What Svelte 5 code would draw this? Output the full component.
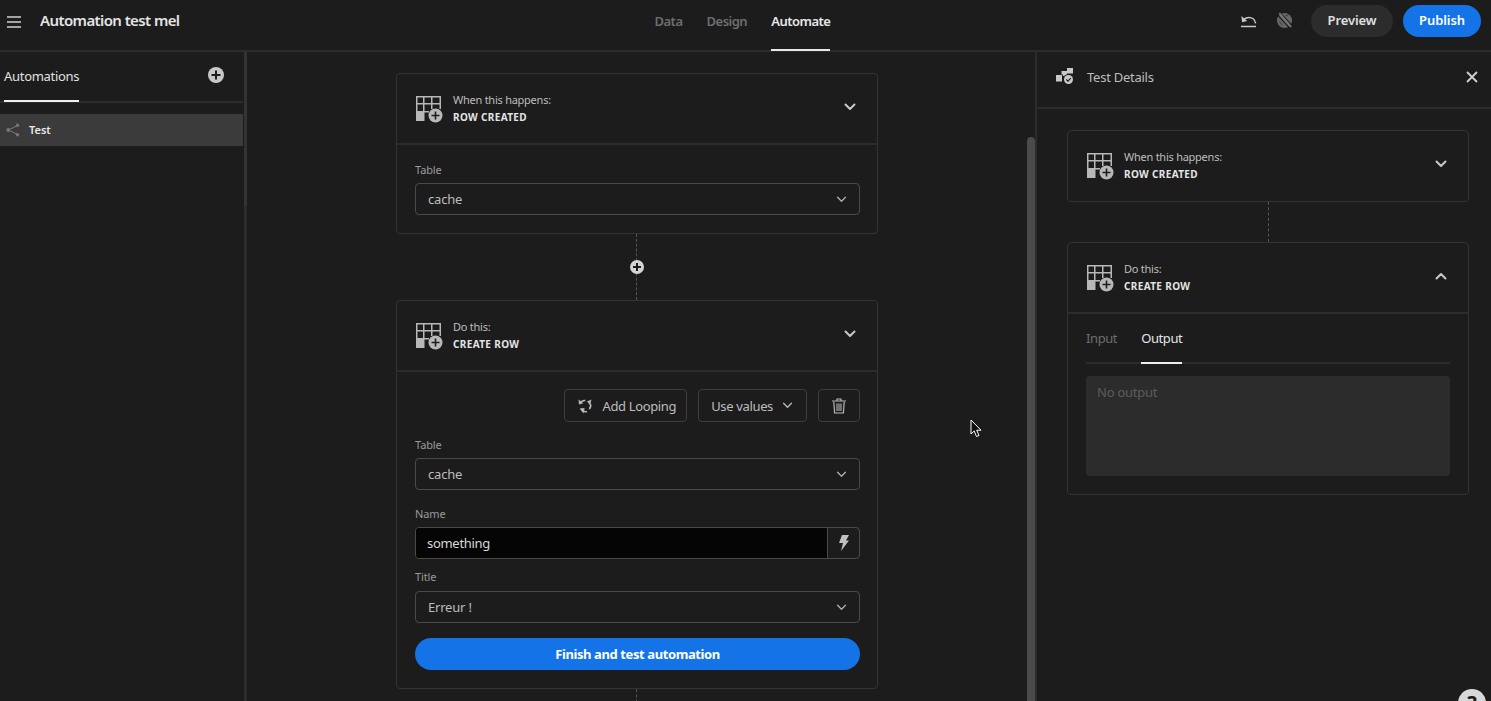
<script lang="ts">
  const tabs = ['Data', 'Design', 'Automate'];
</script>

{#snippet tableIcon()}
  <svg class="step-icon" viewBox="0 0 28 28" width="28" height="28">
    <path fill="#b8b8b8" d="M1 1h25v13h-1.500V9.500h-7V14H16V9.500H9.500V16H14v1.500H9.500V26H1zM2.500 2.500V8H8V2.500zM9.500 2.500V8H16V2.500zM17.500 2.500V8h7V2.500zM2.500 9.500V16H8V9.500z" fill-rule="evenodd" />
    <circle cx="20.500" cy="20.500" r="7" fill="#b8b8b8" />
    <path fill="#1c1c1c" d="M19.700 16.500h1.600v3.200h3.200v1.600h-3.200v3.200h-1.600v-3.200h-3.200v-1.600h3.200z" />
  </svg>
{/snippet}

{#snippet chevron(up = false)}
  <svg class="chev head-chev" class:up viewBox="0 0 12 8" width="12" height="8">
    <path d="M1.500 1.500 6 6l4.500-4.500" fill="none" stroke="currentColor" stroke-width="2" stroke-linecap="round" stroke-linejoin="round" />
  </svg>
{/snippet}

{#snippet stepHead(kicker, title, up = false)}
  <div class="step-head">
    {@render tableIcon()}
    <div class="step-text">
      <div class="kicker">{kicker}</div>
      <div class="step-title">{title}</div>
    </div>
    {@render chevron(up)}
  </div>
{/snippet}

{#snippet select(value)}
  <div class="select">
    <span>{value}</span>
    <svg class="chev small" viewBox="0 0 12 8" width="11" height="7">
      <path d="M1.500 1.500 6 6l4.500-4.500" fill="none" stroke="currentColor" stroke-width="1.500" stroke-linecap="round" stroke-linejoin="round" />
    </svg>
  </div>
{/snippet}

<div class="app">
  <header class="topbar">
    <div class="top-left">
      <svg viewBox="0 0 14 12" width="14" height="12" class="burger">
        <path d="M0 1h14M0 6h14M0 11h14" stroke="#d0d0d0" stroke-width="1.600" />
      </svg>
      <span class="app-name">Automation test mel</span>
    </div>
    <nav class="top-nav">
      {#each tabs as tab}
        <span class="top-tab" class:active={tab === 'Automate'}>{tab}</span>
      {/each}
    </nav>
    <div class="top-right">
      <svg viewBox="0 0 18 14" width="17" height="14" class="undo">
        <path d="M1 12.800h16" stroke="#c8c8c8" stroke-width="1.600" />
        <path d="M16.500 9.500C16 5 12.500 3.200 9.500 3.200 7.500 3.200 5.800 3.800 4 5.200" fill="none" stroke="#c8c8c8" stroke-width="1.600" />
        <path d="M1.500 1.800 2.200 8.200 7.600 7z" fill="#c8c8c8" />
      </svg>
      <svg viewBox="0 0 18 18" width="17" height="17" class="globe">
        <circle cx="9" cy="9" r="8" fill="#666" />
        <path d="M5 1.500 17 14.500M2 3.500 14 16.500" stroke="#1c1c1c" stroke-width="1.300" />
        <path d="M3.500 1 16 16" stroke="#7a7a7a" stroke-width="1.800" />
        <path d="M9.500 4.500 13 3M3.500 10 7 14" stroke="#3a3a3a" stroke-width="1" />
      </svg>
      <span class="pill preview">Preview</span>
      <span class="pill publish">Publish</span>
    </div>
  </header>

  <div class="columns">
    <aside class="sidebar">
      <div class="side-tabs">
        <span class="side-tab">Automations</span>
        <svg viewBox="0 0 16 16" width="16" height="16" class="side-add">
          <circle cx="8" cy="8" r="8" fill="#c8c8c8" />
          <path d="M7 3.500h2V7h3.500v2H9v3.500H7V9H3.500V7H7z" fill="#1c1c1c" />
        </svg>
      </div>
      <div class="side-row">
        <svg viewBox="0 0 14 14" width="14" height="14">
          <path d="M11.500 2.500 2.500 7l9 4.500" fill="none" stroke="#777" stroke-width="1" />
          <circle cx="11.500" cy="2.300" r="1.700" fill="#777" />
          <circle cx="2.300" cy="7" r="1.900" fill="#777" />
          <circle cx="11.500" cy="11.700" r="1.700" fill="#777" />
        </svg>
        <span class="side-name">Test</span>
      </div>
      <div class="side-thumb"></div>
    </aside>

    <main class="canvas">
      <div class="card">
        {@render stepHead('When this happens:', 'ROW CREATED')}
        <div class="card-body first">
          <div class="field-label">Table</div>
          {@render select('cache')}
        </div>
      </div>

      <div class="connector">
        <svg viewBox="0 0 14 14" width="14" height="14" class="conn-add">
          <circle cx="7" cy="7" r="7" fill="#d4d4d4" />
          <path d="M6 3h2v3h3v2H8v3H6V8H3V6h3z" fill="#1c1c1c" />
        </svg>
      </div>

      <div class="card">
        {@render stepHead('Do this:', 'CREATE ROW')}
        <div class="card-body">
          <div class="actions">
            <span class="btn looping">
              <svg viewBox="0 0 16 16" width="16" height="16">
                <path d="M3 5.500C4 3.300 6 2.200 8.400 2.500M13.300 5.500c.8 2 .4 4-1 5.600M10 13.400c-2.300.6-4.800-.3-6.200-2.500" fill="none" stroke="#b8b8b8" stroke-width="1.500" />
                <path d="M1.500 1.500 2 6.400l4.300-1.200zM14.500 1.500 13 7l-3-3.500zM6.500 15.500 2.800 10.500l4.800-.5z" fill="#b8b8b8" />
              </svg>
              Add Looping
            </span>
            <span class="btn values">
              Use values
              <svg viewBox="0 0 12 8" width="11" height="7" class="chev">
                <path d="M1.500 1.500 6 6l4.500-4.500" fill="none" stroke="#b8b8b8" stroke-width="1.500" stroke-linecap="round" stroke-linejoin="round" />
              </svg>
            </span>
            <span class="btn icon-only">
              <svg viewBox="0 0 14 16" width="14" height="16">
                <path d="M0 3h14M5 3V1h4v2M1.800 4l.8 11h8.800l.8-11" fill="none" stroke="#b8b8b8" stroke-width="1.200" />
                <path d="M5 5.500v7.500M7 5.500v7.500M9 5.500v7.500" stroke="#b8b8b8" stroke-width="1.100" />
              </svg>
            </span>
          </div>
          <div class="field-label table-label">Table</div>
          {@render select('cache')}
          <div class="field-label name-label">Name</div>
          <div class="combo">
            <span class="combo-input">something</span>
            <span class="combo-btn">
              <svg viewBox="0 0 10 16" width="10" height="16">
                <path d="M3 0h7L7 5.500h3L2 16l2-8H0z" fill="#c0c0c0" />
              </svg>
            </span>
          </div>
          <div class="field-label title-label">Title</div>
          {@render select('Erreur !')}
          <div class="finish">Finish and test automation</div>
        </div>
      </div>
      <div class="tail"></div>

      <div class="scroll-track"><div class="scroll-thumb"></div></div>
    </main>

    <aside class="details">
      <div class="details-head">
        <svg viewBox="0 0 18 17" width="18" height="17">
          <path d="M0 7h6v6.500H0zM5.500 3H11v5H7V6.500H5.500zM11 0h6v5.500h-6z" fill="#c8c8c8" />
          <circle cx="12.500" cy="11.500" r="5.500" fill="#1c1c1c" />
          <circle cx="12.500" cy="11.500" r="4.500" fill="#c8c8c8" />
          <path d="M10.300 11.500l1.700 1.700 2.800-3" fill="none" stroke="#1c1c1c" stroke-width="1.200" />
        </svg>
        <span class="details-title">Test Details</span>
        <svg viewBox="0 0 12 12" width="12" height="12" class="close">
          <path d="M1 1l10 10M11 1 1 11" stroke="#d0d0d0" stroke-width="1.800" />
        </svg>
      </div>
      <div class="details-body">
        <div class="card trigger">
          {@render stepHead('When this happens:', 'ROW CREATED')}
        </div>
        <div class="link"></div>
        <div class="card">
          {@render stepHead('Do this:', 'CREATE ROW', true)}
          <div class="output-body">
            <div class="io-tabs">
              <span class="io-tab">Input</span>
              <span class="io-tab active">Output</span>
            </div>
            <div class="output-box">No output</div>
          </div>
        </div>
      </div>
    </aside>
  </div>

  <svg class="cursor" viewBox="0 0 12 19" width="12" height="19">
    <path d="M1 1v14l3.200-3 2.300 5.500 2.500-1-2.300-5.300H11z" fill="#111" stroke="#fff" stroke-width="1" />
  </svg>
  <div class="help"></div>
</div>

<style>
  :global(body) {
    margin: 0;
    background: #1c1c1c;
    overflow: hidden;
  }

  .app {
    height: 701px;
    display: flex;
    flex-direction: column;
    background: #1c1c1c;
    color: #d0d0d0;
    font-family: "Noto Sans", sans-serif;
    font-size: 13px;
    overflow: hidden;
    position: relative;
  }

  .topbar {
    height: 50px;
    flex: none;
    display: grid;
    grid-template-columns: 1fr auto 1fr;
    align-items: center;
    border-bottom: 2px solid #2c2c2c;
  }

  .top-left {
    display: flex;
    align-items: center;
    gap: 19px;
    padding-left: 7px;
    margin-top: -10px;
  }

  .burger {
    display: block;
    margin-top: 3px;
  }

  .app-name {
    font-size: 15px;
    font-weight: 600;
    color: #e4e4e4;
    letter-spacing: -0.6px;
  }

  .top-nav {
    display: flex;
    gap: 24px;
    height: 100%;
    align-items: center;
    margin-right: 6px;
  }

  .top-tab {
    height: 100%;
    display: flex;
    align-items: center;
    padding-bottom: 8px;
    box-sizing: border-box;
    font-size: 13px;
    font-weight: 600;
    color: #6e6e6e;
    letter-spacing: -0.5px;
    border-bottom: 2px solid transparent;
    margin-bottom: -2px;
  }

  .top-tab.active {
    color: #e8e8e8;
    border-bottom-color: #e8e8e8;
  }

  .top-right {
    justify-content: flex-end;
    display: flex;
    align-items: center;
    padding-right: 10px;
    margin-top: -9px;
  }

  .undo {
    margin-right: 19px;
  }

  .globe {
    margin-right: 18px;
  }

  .pill {
    height: 32px;
    box-sizing: border-box;
    padding-bottom: 2px;
    border-radius: 16px;
    display: flex;
    align-items: center;
    justify-content: center;
    font-size: 13px;
    font-weight: 600;
    letter-spacing: -0.1px;
  }

  .preview {
    width: 82px;
    background: #2c2c2c;
    color: #e0e0e0;
    margin-right: 10px;
  }

  .publish {
    width: 78px;
    background: #1473e6;
    color: #fff;
  }

  .columns {
    flex: 1;
    min-height: 0;
    display: grid;
    grid-template-columns: 247px 789px 1fr;
  }

  .sidebar {
    border-right: 3px solid #2c2c2c;
    position: relative;
  }

  .side-thumb {
    position: absolute;
    top: 0;
    right: -3px;
    width: 3px;
    height: 154px;
    background: #333;
  }

  .side-tabs {
    border-bottom: 2px solid #2c2c2c;
    margin-right: 1px;
    display: flex;
    align-items: center;
    justify-content: space-between;
    padding: 0 19px 0 4px;
    height: 49px;
  }

  .side-tab {
    font-size: 13px;
    color: #e0e0e0;
    letter-spacing: -0.3px;
    height: 100%;
    line-height: 50px;
    border-bottom: 2px solid #efefef;
    width: 75px;
    white-space: nowrap;
  }

  .side-add {
    margin-top: -4px;
  }

  .side-row {
    margin-top: 11px;
    height: 32px;
    background: #3b3b3b;
    display: flex;
    align-items: center;
    gap: 9px;
    padding-left: 6px;
    font-size: 11px;
    font-weight: 600;
    color: #e8e8e8;
    margin-right: 1px;
  }

  .side-name {
    margin-top: -1px;
  }

  .canvas {
    position: relative;
    padding: 21px 9px 0 0;
    display: flex;
    flex-direction: column;
    align-items: center;
    overflow: hidden;
    box-sizing: border-box;
  }

  .card {
    box-sizing: border-box;
    width: 482px;
    flex: none;
    border: 1px solid #333;
    border-radius: 4px;
  }

  .step-head {
    height: 69px;
    display: flex;
    align-items: center;
    padding: 0 21px 0 18px;
    gap: 10px;
  }

  .step-icon {
    flex: none;
    margin-top: 1px;
  }

  .step-text {
    flex: 1;
    line-height: 16px;
    margin-bottom: 1px;
  }

  .kicker {
    font-size: 11px;
    color: #bdbdbd;
    letter-spacing: -0.25px;
  }

  .step-title {
    font-size: 10px;
    font-weight: 700;
    letter-spacing: 0.35px;
    color: #e4e4e4;
    margin-top: 1px;
  }

  .chev {
    display: block;
    color: #c8c8c8;
  }

  .head-chev {
    margin-bottom: 3px;
  }

  .chev.up {
    transform: rotate(180deg);
  }

  .card-body {
    border-top: 2px solid #2c2c2c;
    padding: 17px 17px 18px 18px;
    display: flex;
    flex-direction: column;
  }

  .card-body.first {
    padding-top: 18px;
  }

  .field-label {
    font-size: 11px;
    line-height: 14px;
    color: #9a9a9a;
    margin-bottom: 6px;
    letter-spacing: -0.1px;
  }

  .select {
    height: 32px;
    box-sizing: border-box;
    border: 1px solid #4a4a4a;
    border-radius: 4px;
    display: flex;
    align-items: center;
    justify-content: space-between;
    padding: 0 12px 0 12px;
    font-size: 13px;
    letter-spacing: -0.2px;
    color: #bdbdbd;
  }

  .select .chev {
    color: #b0b0b0;
  }

  .actions {
    display: flex;
    justify-content: flex-end;
    gap: 11px;
  }

  .btn {
    height: 33px;
    box-sizing: border-box;
    display: flex;
    align-items: center;
    gap: 9px;
    padding: 0 11px 0 12px;
    border: 1px solid #3e3e3e;
    border-radius: 4px;
    font-size: 13px;
    color: #bdbdbd;
    letter-spacing: -0.35px;
  }

  .looping {
    padding-right: 10px;
  }

  .values {
    padding-right: 13px;
  }

  .icon-only {
    width: 42px;
    justify-content: center;
    padding: 0;
  }

  .table-label {
    margin-top: 16px;
  }

  .name-label {
    margin-top: 17px;
  }

  .title-label {
    margin-top: 11px;
    margin-bottom: 7px;
  }

  .combo {
    height: 32px;
    box-sizing: border-box;
    display: flex;
    border: 1px solid #4a4a4a;
    border-radius: 4px;
    overflow: hidden;
  }

  .combo-input {
    flex: 1;
    background: #050505;
    display: flex;
    align-items: center;
    padding-left: 11px;
    font-size: 13px;
    letter-spacing: -0.3px;
    color: #d8d8d8;
  }

  .combo-btn {
    width: 31px;
    border-left: 1px solid #4a4a4a;
    display: flex;
    align-items: center;
    justify-content: center;
  }

  .finish {
    margin-top: 15px;
    height: 32px;
    border-radius: 16px;
    background: #1473e6;
    color: #fff;
    font-size: 13px;
    font-weight: 700;
    letter-spacing: -0.4px;
    display: flex;
    align-items: center;
    justify-content: center;
  }

  .connector {
    width: 1px;
    height: 66px;
    flex: none;
    border-left: 1px dashed #555;
    position: relative;
  }

  .conn-add {
    position: absolute;
    left: -7px;
    top: 26px;
  }

  .tail {
    width: 1px;
    height: 30px;
    flex: none;
    border-left: 1px dashed #555;
  }

  .scroll-track {
    position: absolute;
    top: 0;
    bottom: 0;
    right: 0;
    width: 9px;
  }

  .scroll-thumb {
    position: absolute;
    top: 85px;
    bottom: 0;
    left: 0;
    width: 8px;
    background: #4b4b4b;
    border-radius: 4px 4px 0 0;
  }

  .details {
    border-left: 2px solid #2c2c2c;
    margin-left: -1px;
  }

  .details-head {
    border-bottom: 2px solid #2c2c2c;
    display: flex;
    align-items: center;
    padding: 0 13px 6px 19px;
    box-sizing: border-box;
    gap: 13px;
    height: 57px;
  }

  .details-title {
    flex: 1;
    font-size: 13px;
    color: #bdbdbd;
    letter-spacing: -0.25px;
  }

  .details-body {
    padding: 21px 21px 0 30px;
    display: flex;
    flex-direction: column;
  }

  .details-body .card {
    width: 402px;
  }

  .details-body .trigger {
    height: 72px;
  }

  .link {
    margin-left: 201px;
    height: 40px;
    width: 1px;
    border-left: 1px dashed #555;
  }

  .output-body {
    border-top: 2px solid #2c2c2c;
    padding: 0 18px 18px 18px;
  }

  .io-tabs {
    display: flex;
    gap: 24px;
    border-bottom: 2px solid #2c2c2c;
    height: 48px;
  }

  .io-tab {
    font-size: 13px;
    line-height: 48px;
    color: #6e6e6e;
    letter-spacing: -0.4px;
  }

  .io-tab.active {
    color: #e4e4e4;
    border-bottom: 2px solid #efefef;
    height: 48px;
  }

  .output-box {
    margin-top: 12px;
    height: 100px;
    box-sizing: border-box;
    border-radius: 4px;
    background: #2c2c2c;
    padding: 7px 11px;
    font-size: 13px;
    color: #5c5c5c;
    letter-spacing: -0.25px;
  }

  .cursor {
    position: absolute;
    left: 970px;
    top: 419px;
  }

  .help {
    position: absolute;
    left: 1458px;
    top: 689px;
    width: 28px;
    height: 28px;
    border-radius: 50%;
    background: #d8d8d8;
  }

  .help::after {
    content: "?";
    display: block;
    color: #1c1c1c;
    font-size: 20px;
    font-weight: 700;
    text-align: center;
    line-height: 28px;
  }
</style>
